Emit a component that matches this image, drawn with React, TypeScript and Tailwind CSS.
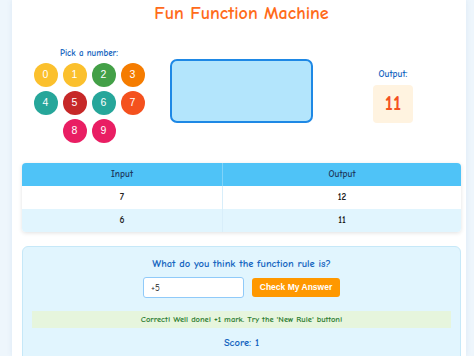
import React from "react";

const balls = [
    {n: 0, c: "bg-[#fbc02d]"},
    {n: 1, c: "bg-[#fbc02d]"},
    {n: 2, c: "bg-[#43a047]"},
    {n: 3, c: "bg-[#f57c00]"},
    {n: 4, c: "bg-[#26a69a]"},
    {n: 5, c: "bg-[#c62828]"},
    {n: 6, c: "bg-[#26a69a]"},
    {n: 7, c: "bg-[#f4511e]"},
    {n: 8, c: "bg-[#e91e63]"},
    {n: 9, c: "bg-[#e91e63]"},
];

const rows = [
    {input: 7, output: 12},
    {input: 6, output: 11},
];

const fun = {fontFamily: '"Comic Sans MS", "Comic Neue", Lato, sans-serif'};

export default function App() {
    return (
        <div className="min-h-[356px] h-[356px] overflow-hidden bg-[#eef6fc]" style={fun}>
            <div className="ml-[12px] w-[454px] h-full bg-white pl-[10px] pr-[5px] shadow-[0_0_6px_rgba(0,80,160,0.08)]">
                <h1 className="h-[28px] leading-[28px] text-center text-[18px] font-bold text-[#ff6b1a]">
                    Fun Function Machine
                </h1>

                <div className="flex items-start mt-[19px] pl-[11px]">
                    <div className="w-[112px] flex flex-col items-center">
                        <p className="h-[12px] leading-[12px] text-[9px] font-bold text-[#1565c0]">Pick a number:</p>
                        <div className="mt-[4px] flex flex-wrap justify-center gap-x-[5px] gap-y-[4px]">
                            {balls.map(b => (
                                <button
                                    key={b.n}
                                    className={`w-6 h-6 rounded-full text-white text-[10.5px] font-['Liberation_Sans',sans-serif] ${b.c}`}
                                >
                                    {b.n}
                                </button>
                            ))}
                        </div>
                    </div>

                    <div
                        className="ml-[25px] mt-[12px] w-[143px] h-[64px] rounded-[7px] border-2 border-[#1e88e5] bg-[#b3e5fc]"/>

                    <div className="ml-[60px] mt-[21px] flex flex-col items-center w-[40px]">
                        <p className="h-[12px] leading-[12px] text-[9.5px] font-bold text-[#1565c0] whitespace-nowrap">Output:</p>
                        <div
                            className="mt-[5px] w-[40px] h-[38px] rounded-[4px] bg-[#fff3e0] flex items-center justify-center text-[21px] font-bold text-[#f4511e]">
                            11
                        </div>
                    </div>
                </div>

                <div
                    className="mt-[20px] rounded-[4px] overflow-hidden shadow-[0_1px_4px_rgba(0,0,0,0.12)] text-[9.5px] font-bold">
                    <div className="grid grid-cols-[201px_1fr] h-[23px] bg-[#4fc3f7] text-[#1e3a5f]">
                        <div className="flex items-center justify-center border-r border-[#7fd3f9]">Input</div>
                        <div className="flex items-center justify-center">Output</div>
                    </div>
                    {rows.map((r, i) => (
                        <div key={i}
                             className={`grid grid-cols-[201px_1fr] h-[23px] text-[#222] ${i % 2 ? "bg-[#e1f5fe]" : "bg-white"}`}>
                            <div className="flex items-center justify-center border-r border-[#d8eefa]">{r.input}</div>
                            <div className="flex items-center justify-center">{r.output}</div>
                        </div>
                    ))}
                </div>

                <div
                    className="mt-[14px] h-[120px] rounded-t-[6px] border border-[#c6e8f8] bg-[#e1f5fe] px-[9px] pt-[10px]">
                    <p className="h-[14px] leading-[14px] text-center text-[10.5px] font-bold text-[#1565c0]">
                        What do you think the function rule is?
                    </p>
                    <div className="mt-[6px] flex items-center justify-center gap-[8px]">
                        <input
                            readOnly
                            value="+5"
                            className="w-[101px] h-[21px] rounded-[3px] border border-[#90caf9] bg-white px-[7px] text-[9px] text-[#222] outline-none"
                            style={fun}
                        />
                        <button
                            className="w-[88px] h-[19px] rounded-[3px] bg-[#ff9800] text-white text-[8.5px] font-bold font-['Liberation_Sans',sans-serif]">
                            Check My Answer
                        </button>
                    </div>
                    <div
                        className="mt-[13px] h-[17px] bg-[#e6f5dd] flex items-center justify-center text-[8.5px] font-bold text-[#2e7d32]">
                        Correct! Well done! +1 mark. Try the 'New Rule' button!
                    </div>
                    <p className="mt-[8px] h-[14px] leading-[14px] text-center text-[10.5px] font-bold text-[#1565c0]">Score: 1</p>
                </div>
            </div>
        </div>
    );
}
